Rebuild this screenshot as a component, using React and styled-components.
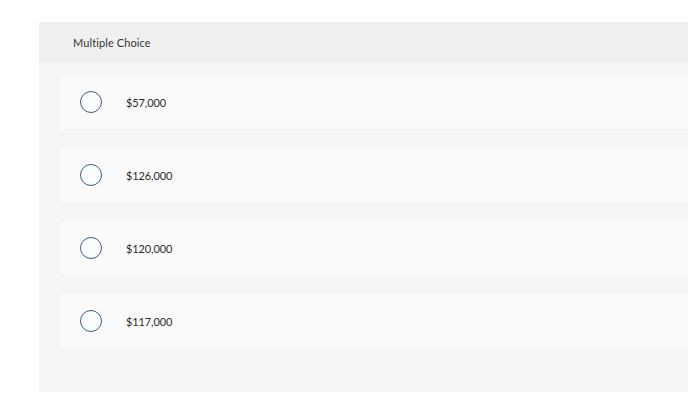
import React from "react";
import styled, { createGlobalStyle } from "styled-components";

const Global = createGlobalStyle`
  html, body { margin: 0; padding: 0; background: #ffffff; }
  body { font-family: "Lato", "Open Sans", sans-serif; overflow: hidden; }
`;

const Page = styled.div`
  padding: 22px 0 0 39px;
`;

const Panel = styled.section`
  width: 660px;
  background: #f5f5f5;
  padding-bottom: 44px;
`;

const Header = styled.div`
  height: 40px;
  background: #f0f0f0;
  display: flex;
  align-items: center;
  padding-left: 34px;
  font-size: 11px;
  color: #333;
  letter-spacing: 0.1px;
`;

const List = styled.div`
  display: flex;
  flex-direction: column;
  gap: 19px;
  padding: 13px 0 0 21px;
`;

const Option = styled.label`
  height: 54px;
  background: #fafafa;
  display: flex;
  align-items: center;
  padding-left: 20px;
  cursor: pointer;
`;

const Radio = styled.span`
  width: 20px;
  height: 20px;
  border-radius: 50%;
  border: 1.5px solid #3d5f82;
  background: #fbfdff;
  flex: none;
`;

const Label = styled.span`
  margin-left: 24px;
  font-size: 11px;
  color: #2b2b2b;
  letter-spacing: -0.1px;
`;

const options = ["$57,000", "$126,000", "$120,000", "$117,000"];

export default function App() {
  return (
    <>
      <Global />
      <Page>
        <Panel>
          <Header>Multiple Choice</Header>
          <List>
            {options.map((o) => (
              <Option key={o}>
                <Radio />
                <Label>{o}</Label>
              </Option>
            ))}
          </List>
        </Panel>
      </Page>
    </>
  );
}
